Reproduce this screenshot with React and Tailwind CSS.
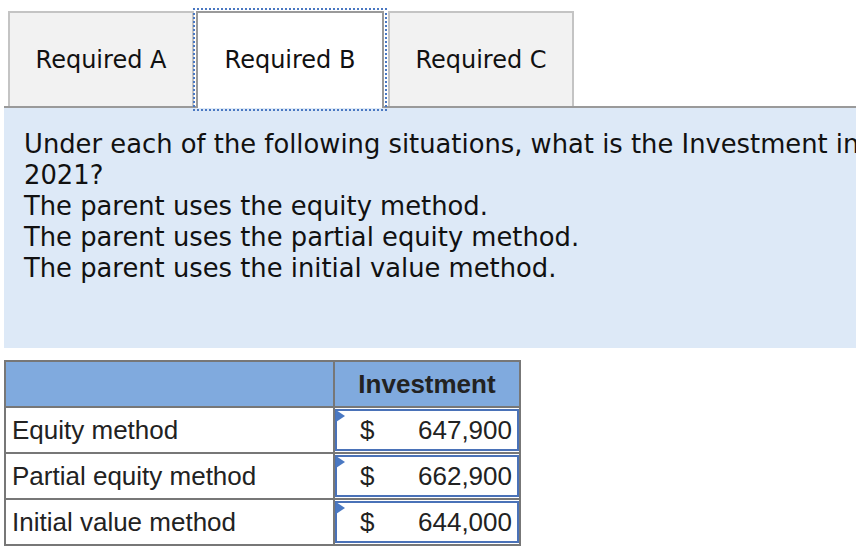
import React from 'react';

const rows = [
    { label: 'Equity method', value: '647,900' },
    { label: 'Partial equity method', value: '662,900' },
    { label: 'Initial value method', value: '644,000' },
];

const Tab = ({ label, active, className = '' }) => {
    if (active) {
        return (
            <div className={`relative -mb-[2px] h-[97px] w-[188px] bg-white border-t-2 border-x-2 border-[#9a9a9a] outline-2 outline-dotted outline-[#4a78c2] outline-offset-[1px] flex items-center justify-center pb-[2px] z-10 ${className}`}>
                <span>{label}</span>
            </div>
        );
    }
    return (
        <div className={`h-[95px] w-[186px] bg-[#f2f2f2] border-t-2 border-x-2 border-[#c4c4c4] flex items-center justify-center ${className}`}>
            <span>{label}</span>
        </div>
    );
};

const App = () => {
    return (
        <div
            className="w-[856px] h-[558px] bg-white overflow-hidden text-[#111]"
            style={{ fontFamily: '"DejaVu Sans", Verdana, sans-serif' }}
        >
            <div className="ml-[4px] pt-[11px]">
                <div className="flex items-end pl-[4px] border-b-2 border-[#9a9a9a] text-[24px]">
                    <Tab label="Required A" />
                    <Tab label="Required B" active className="ml-[2px]" />
                    <Tab label="Required C" className="ml-[4px] w-[185px]" />
                </div>

                <div className="h-[240px] bg-[#dde9f7] pl-[20px] pt-[21px] text-[25.8px] leading-[31px] overflow-hidden">
                    <p className="whitespace-nowrap">
                        Under each of the following situations, what is the Investment in Sub account balance at December 31,
                    </p>
                    <p>2021?</p>
                    <p>The parent uses the equity method.</p>
                    <p>The parent uses the partial equity method.</p>
                    <p>The parent uses the initial value method.</p>
                </div>

                <table
                    className="mt-[12px] border-collapse text-[26px] text-[#222]"
                    style={{ fontFamily: '"Liberation Sans", Arial, sans-serif' }}
                >
                    <thead>
                        <tr className="h-[46px] bg-[#80aade]">
                            <th className="w-[329px] border-2 border-[#777]"></th>
                            <th className="w-[186px] border-2 border-[#777] font-bold text-center">Investment</th>
                        </tr>
                    </thead>
                    <tbody>
                        {rows.map((row) => (
                            <tr key={row.label} className="h-[46px]">
                                <td className="border-2 border-[#777] pl-[6px] text-left">{row.label}</td>
                                <td className="border-2 border-[#777] p-0">
                                    <div className="relative h-[42px] border-2 border-[#4a72b8] flex items-center justify-between pl-[23px] pr-[5px]">
                                        <span className="absolute -left-[1px] -top-[1px] w-0 h-0 border-t-[6px] border-b-[6px] border-l-[9px] border-t-transparent border-b-transparent border-l-[#4a78c2]"></span>
                                        <span>$</span>
                                        <span>{row.value}</span>
                                    </div>
                                </td>
                            </tr>
                        ))}
                    </tbody>
                </table>
            </div>
        </div>
    );
};

export default App;
